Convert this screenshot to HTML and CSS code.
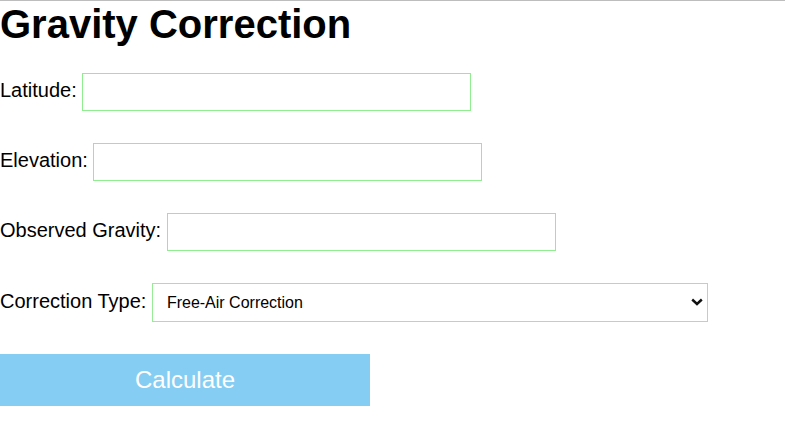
FILE: index.html
```
<!DOCTYPE html>
<html>
<head>
<meta charset="utf-8">
<link rel="stylesheet" href="styles.css">
</head>
<body>
<div class="page">
  <h1 class="title">Gravity Correction</h1>
  <form class="form">
    <div class="row"><label class="label" for="lat">Latitude:</label> <input class="field" id="lat" type="text"></div>
    <div class="row"><label class="label" for="elev">Elevation:</label> <input class="field" id="elev" type="text"></div>
    <div class="row"><label class="label" for="obs">Observed Gravity:</label> <input class="field" id="obs" type="text"></div>
    <div class="row"><label class="label" for="type">Correction Type:</label>
      <span class="select-wrap">
        <select class="select" id="type"><option>Free-Air Correction</option><option>Bouguer Correction</option></select>
        <svg class="chev" width="12" height="8" viewBox="0 0 12 8"><path d="M1.2 1.5 L6 6 L10.8 1.5" fill="none" stroke="#111" stroke-width="2.4"/></svg>
      </span>
    </div>
    <button class="btn" type="button">Calculate</button>
  </form>
</div>
</body>
</html>
```
FILE: styles.css
```
html, body {
  margin: 0;
  padding: 0;
  background: #fff;
}
body {
  font-family: "Liberation Sans", Arial, sans-serif;
  color: #000;
  border-top: 1px solid #bdbdbd;
}
.title {
  margin: 0;
  font-size: 40px;
  font-weight: bold;
  line-height: 46px;
}
.form {
  margin: 26px 0 0 0;
}
.row {
  display: flex;
  align-items: baseline;
  margin-bottom: 32px;
  font-size: 20px;
}
.label {
  margin-right: 5.5px;
}
.field {
  box-sizing: border-box;
  width: 389px;
  height: 38px;
  border: 1px solid #90ee90;
  padding: 0 10px;
  font-size: 16px;
  font-family: "Liberation Sans", Arial, sans-serif;
  outline: none;
  margin: 0;
}
.select-wrap {
  position: relative;
  display: inline-flex;
}
.select {
  box-sizing: border-box;
  width: 556px;
  height: 39px;
  border: 1px solid #98ec98;
  border-radius: 0;
  background: #fff;
  padding: 0 30px 0 14px;
  font-size: 16px;
  font-family: "Liberation Sans", Arial, sans-serif;
  color: #000;
  margin: 0;
  appearance: none;
  -webkit-appearance: none;
}
.chev {
  position: absolute;
  right: 5px;
  top: 15px;
  pointer-events: none;
}
.btn {
  display: block;
  width: 370px;
  height: 52px;
  border: none;
  background: #85cdf3;
  color: #fff;
  font-size: 24px;
  font-family: "Liberation Sans", Arial, sans-serif;
  margin: 0;
  padding: 0;
}
```
